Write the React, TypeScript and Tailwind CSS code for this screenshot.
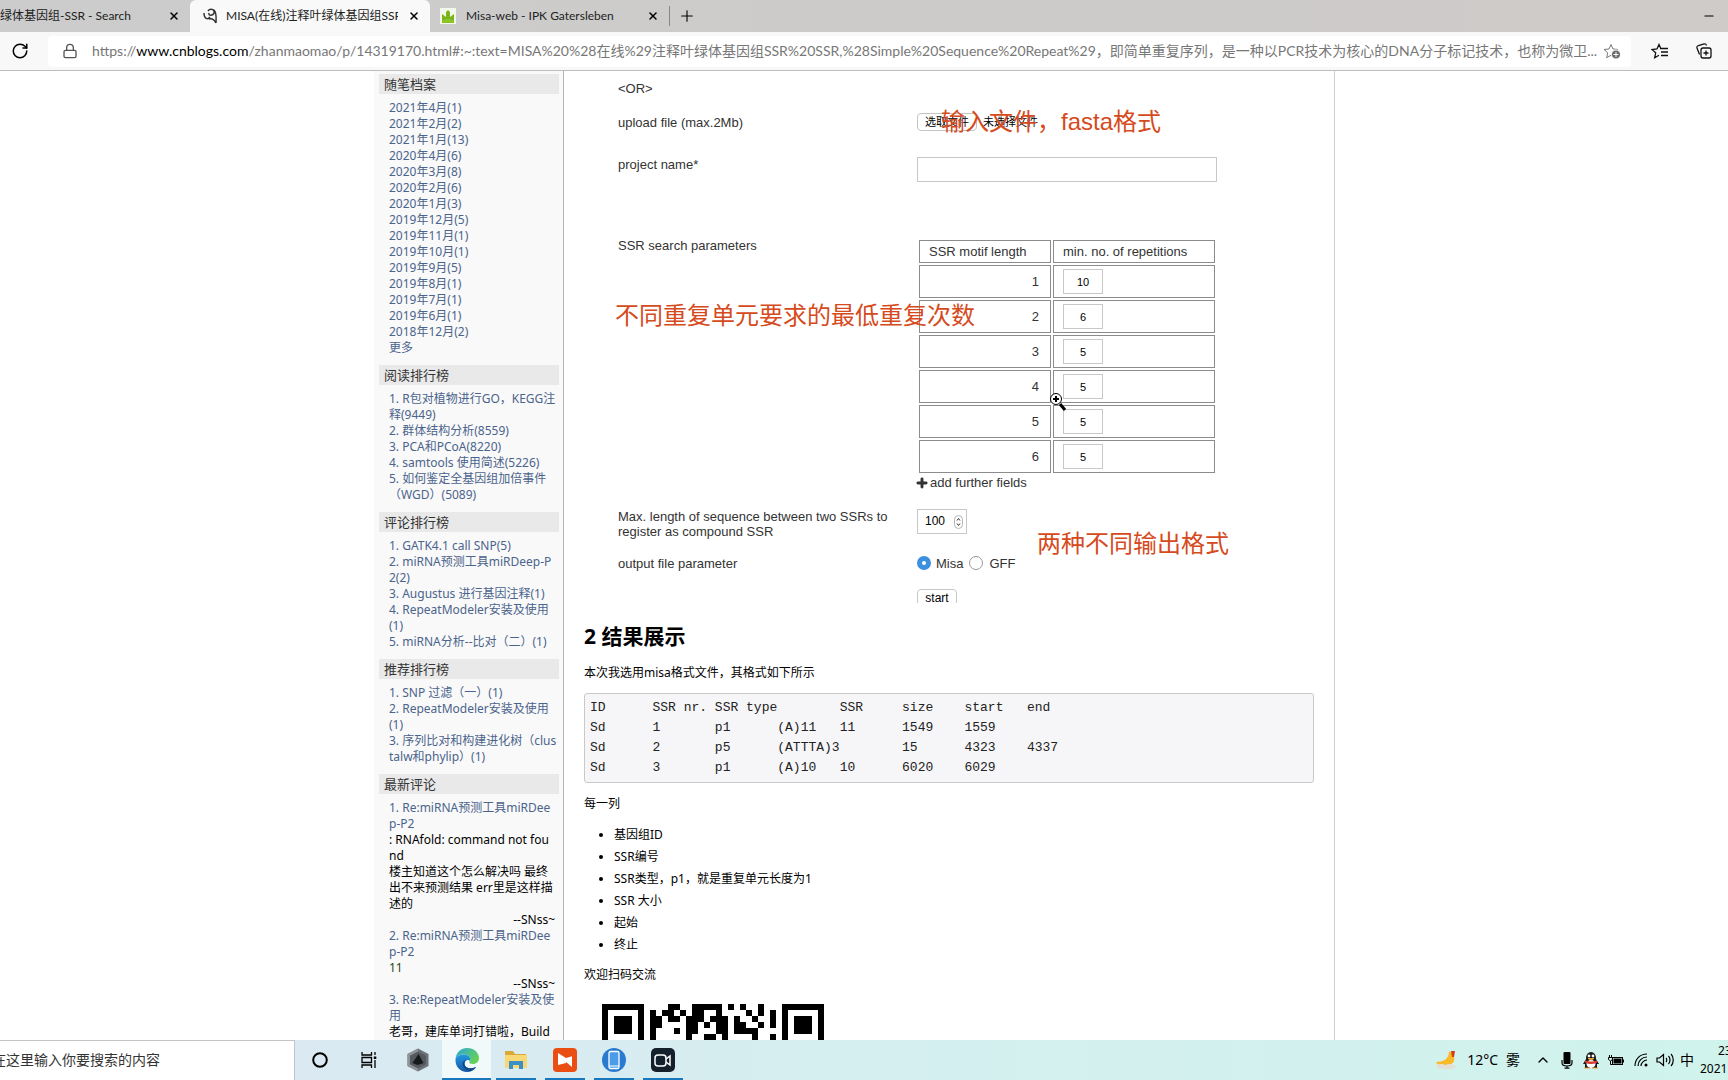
import { ReactNode } from "react";
import { ChevronUp, Lock, Minus, Plus, RotateCw, X } from "lucide-react";

const archive = [
  "2021年4月(1)",
  "2021年2月(2)",
  "2021年1月(13)",
  "2020年4月(6)",
  "2020年3月(8)",
  "2020年2月(6)",
  "2020年1月(3)",
  "2019年12月(5)",
  "2019年11月(1)",
  "2019年10月(1)",
  "2019年9月(5)",
  "2019年8月(1)",
  "2019年7月(1)",
  "2019年6月(1)",
  "2018年12月(2)",
  "更多",
];

const topRead = [
  "1. R包对植物进行GO，KEGG注释(9449)",
  "2. 群体结构分析(8559)",
  "3. PCA和PCoA(8220)",
  "4. samtools 使用简述(5226)",
  "5. 如何鉴定全基因组加倍事件（WGD）(5089)",
];

const topComment = [
  "1. GATK4.1 call SNP(5)",
  "2. miRNA预测工具miRDeep-P2(2)",
  "3. Augustus 进行基因注释(1)",
  "4. RepeatModeler安装及使用(1)",
  "5. miRNA分析--比对（二）(1)",
];

const topLiked = [
  "1. SNP 过滤（一）(1)",
  "2. RepeatModeler安装及使用(1)",
  "3. 序列比对和构建进化树（clustalw和phylip）(1)",
];

const motifs = [
  { length: 1, repeats: 10 },
  { length: 2, repeats: 6 },
  { length: 3, repeats: 5 },
  { length: 4, repeats: 5 },
  { length: 5, repeats: 5 },
  { length: 6, repeats: 5 },
];

const misaOutput = [
  "ID\tSSR nr.\tSSR type\tSSR\tsize\tstart\tend",
  "Sd\t1\tp1\t(A)11\t11\t1549\t1559",
  "Sd\t2\tp5\t(ATTTA)3\t15\t4323\t4337",
  "Sd\t3\tp1\t(A)10\t10\t6020\t6029",
].join("\n");

const columns = ["基因组ID", "SSR编号", "SSR类型，p1，就是重复单元长度为1", "SSR 大小", "起始", "终止"];

// one string per module row, # is a dark module
const qrRows = [
  "#######....##..#####.#.#..#...#######",
  "#.....#.#.##.#.##..#....#.#.#.#.....#",
  "#.###.#.##.##.###.###.#..#..#.#.###.#",
  "#.###.#.##....##.#.##.##..#.#.#.###.#",
  "#.###.#.#...#.##...##.####....#.###.#",
  "#.....#.#.....#..##.#....#..#.#.....#",
];

function Tab({ title, icon, active }: { title: string; icon?: ReactNode; active?: boolean }) {
  return (
    <div
      className={`flex h-8 items-center pr-2 ${
        active ? "w-60 rounded-t-md bg-[#f8f9f8] pl-3" : icon ? "w-[239px] pl-[10px]" : "w-[190px]"
      }`}
    >
      {icon && <span className="mr-[10px] shrink-0">{icon}</span>}
      <span className="flex-1 overflow-hidden font-['Lato','Noto_Sans_CJK_SC',sans-serif] text-xs whitespace-nowrap text-[#222]">
        {title}
      </span>
      <button aria-label="关闭标签页" className="ml-2 flex size-4 shrink-0 items-center justify-center">
        <X className="size-3 text-black" strokeWidth={3} />
      </button>
    </div>
  );
}

function Panel({ title, children }: { title: string; children: ReactNode }) {
  return (
    <section className="mb-[9px]">
      <h3 className="mb-[6px] h-5 bg-[#e9e9e9] pl-[5px] text-[13px] leading-5 text-[#333]">{title}</h3>
      <div className="pr-[2px] pl-[10px] leading-4 break-all">{children}</div>
    </section>
  );
}

function LinkList({ items }: { items: string[] }) {
  return (
    <ul>
      {items.map((item) => (
        <li key={item}>
          <a href="#" className="text-[#4b648c]">{item}</a>
        </li>
      ))}
    </ul>
  );
}

function Sidebar() {
  return (
    <aside className="w-[190px] shrink-0 border-r border-[#b5b5b5] bg-[#f9f9f9] pt-[3px] pr-1 pl-[5px]">
      <Panel title="随笔档案"><LinkList items={archive} /></Panel>
      <Panel title="阅读排行榜"><LinkList items={topRead} /></Panel>
      <Panel title="评论排行榜"><LinkList items={topComment} /></Panel>
      <Panel title="推荐排行榜"><LinkList items={topLiked} /></Panel>
      <Panel title="最新评论">
        <div className="pr-[2px]">
          <a href="#" className="block text-[#4b648c]">1. Re:miRNA预测工具miRDeep-P2</a>
          <p>: RNAfold: command not found</p>
          <p>楼主知道这个怎么解决吗 最终出不来预测结果 err里是这样描述的</p>
          <p className="text-right">--SNss~</p>
          <a href="#" className="block text-[#4b648c]">2. Re:miRNA预测工具miRDeep-P2</a>
          <p className="text-[#1c4a1c]">11</p>
          <p className="text-right">--SNss~</p>
          <a href="#" className="block text-[#4b648c]">3. Re:RepeatModeler安装及使用</a>
          <p>老哥，建库单词打错啦，Build</p>
        </div>
      </Panel>
    </aside>
  );
}

function Note({ className, children }: { className: string; children: ReactNode }) {
  return (
    <span className={`absolute text-2xl leading-8 whitespace-nowrap text-[#d64a20] ${className}`}>{children}</span>
  );
}

function SsrForm() {
  return (
    <form className="relative pl-[34px] font-['Liberation_Sans','Noto_Sans_CJK_SC',sans-serif] text-[13px] leading-[15px] text-[#333]">
      <div className="flex h-[34px] items-center">&lt;OR&gt;</div>
      <div className="grid h-[34px] grid-cols-[299px_1fr] items-center">
        <span>upload file (max.2Mb)</span>
        <div className="flex items-center gap-[6px] text-[11px] text-black">
          <button type="button" className="h-[18px] w-[60px] rounded border border-[#c4c4c4] leading-4">选取文件</button>
          <span>未选择文件</span>
        </div>
      </div>
      <div className="grid h-[99px] grid-cols-[299px_1fr] items-start pt-[18px]">
        <label htmlFor="project">project name*</label>
        <input id="project" className="h-[25px] w-[300px] border border-[#c8c8c8] px-2" />
      </div>
      <div className="grid grid-cols-[299px_1fr] items-start">
        <span>SSR search parameters</span>
        <div>
          <table className="w-[300px] table-fixed border-separate border-spacing-[2px]">
            <thead>
              <tr className="h-[23px]">
                <th className="w-[132px] border border-[#8c8c8c] px-[9px] text-left font-normal">SSR motif length</th>
                <th className="border border-[#8c8c8c] px-[9px] text-left font-normal">min. no. of repetitions</th>
              </tr>
            </thead>
            <tbody>
              {motifs.map((m) => (
                <tr key={m.length} className="h-[33px]">
                  <td className="border border-[#8c8c8c] px-[11px] text-right">{m.length}</td>
                  <td className="border border-[#8c8c8c] px-[9px]">
                    <input
                      aria-label={`repetitions ${m.length}`}
                      defaultValue={m.repeats}
                      className="block h-[25px] w-10 border border-[#c8c8c8] text-center text-[11px] text-black"
                    />
                  </td>
                </tr>
              ))}
            </tbody>
          </table>
          <button type="button" className="-ml-[2px] flex h-[15px] items-center gap-px">
            <Plus className="size-[14px]" strokeWidth={5} />
            add further fields
          </button>
        </div>
      </div>
      <div className="mt-[19px] grid grid-cols-[299px_1fr] items-start">
        <label htmlFor="maxlen" className="pr-6">Max. length of sequence between two SSRs to register as compound SSR</label>
        <div className="flex h-[25px] w-[50px] items-center border border-[#c8c8c8]">
          <input id="maxlen" defaultValue="100" className="w-8 pl-[7px] text-[12px] text-black" />
          <svg className="ml-1 h-[14px] w-[10px]" viewBox="0 0 10 14" fill="none" stroke="#b5b5b5">
            <rect x="0.5" y="0.5" width="8" height="13" rx="4" />
            <path d="M3 5.5l1.5-2 1.5 2M3 8.5l1.5 2 1.5-2" stroke="#333" />
          </svg>
        </div>
      </div>
      <div className="mt-4 grid h-4 grid-cols-[299px_1fr] items-center">
        <span>output file parameter</span>
        <div className="flex items-center">
          <input
            id="misa"
            type="radio"
            name="output"
            defaultChecked
            className="size-[14px] appearance-none rounded-full border border-[#3d8fe0] bg-white checked:border-[5px]"
          />
          <label htmlFor="misa" className="mr-[6px] ml-[5px]">Misa</label>
          <input id="gff" type="radio" name="output" className="size-[14px] appearance-none rounded-full border border-[#999] bg-white" />
          <label htmlFor="gff" className="ml-[6px]">GFF</label>
        </div>
      </div>
      <div className="mt-[18px] ml-[299px] h-[14px] overflow-hidden">
        <button type="button" className="h-[18px] w-10 rounded border border-[#c8c8c8] text-[12px] leading-[15px] text-black">start</button>
      </div>
      <Note className="top-[35px] left-[357px]">输入文件，fasta格式</Note>
      <Note className="top-[229px] left-[31px]">不同重复单元要求的最低重复次数</Note>
      <Note className="top-[457px] left-[453px]">两种不同输出格式</Note>
      <svg className="absolute top-[321px] left-[465px] size-5" viewBox="0 0 20 20" fill="none">
        <path d="M11 12l5 6" stroke="#000" strokeWidth="3" />
        <circle cx="7" cy="7" r="5.5" fill="#fff" stroke="#000" />
        <path d="M4 7h6M7 4v6" stroke="#000" strokeWidth="2" />
      </svg>
    </form>
  );
}

function QrCode() {
  return (
    <svg className="mt-[18px] ml-[18px] h-9 w-[222px]" viewBox="0 0 37 6" shapeRendering="crispEdges" role="img" aria-label="二维码">
      {qrRows.map((row, y) =>
        row.split("").map((c, x) => (c === "#" ? <rect key={`${x}-${y}`} x={x} y={y} width="1" height="1" /> : null))
      )}
    </svg>
  );
}

function Article() {
  return (
    <main className="min-w-0 flex-1 border-r border-[#cfcfcf] pr-5 pl-5 leading-[22px]">
      <SsrForm />
      <h2 className="mt-[18px] text-[21px] leading-[30px] font-bold">2 结果展示</h2>
      <p className="mt-[11px]">本次我选用misa格式文件，其格式如下所示</p>
      <pre className="mt-[9px] rounded-[3px] border border-[#c9c9c9] bg-[#f6f6f8] px-[5px] py-1 font-['Liberation_Mono',monospace] text-[13px] leading-5 text-[#222] [tab-size:8]">
        {misaOutput}
      </pre>
      <p className="mt-[10px]">每一列</p>
      <ul className="mt-[9px] list-disc pl-[30px]">
        {columns.map((c) => (
          <li key={c}>{c}</li>
        ))}
      </ul>
      <p className="mt-2">欢迎扫码交流</p>
      <QrCode />
    </main>
  );
}

function AppButton({ label, active, running, children }: { label: string; active?: boolean; running?: boolean; children: ReactNode }) {
  return (
    <button aria-label={label} className={`flex h-10 w-[49px] flex-col items-center ${active ? "bg-[#f1f9fb]" : ""}`}>
      <span className="flex h-[38px] items-center pt-[2px]">{children}</span>
      {running && <span className={`h-[2px] bg-[#1878bd] ${active ? "w-full" : "w-10"}`} />}
    </button>
  );
}

function Taskbar() {
  return (
    <footer className="flex h-10 shrink-0 items-center overflow-hidden bg-linear-to-r from-[#dde6f3] via-[#d5eff0] to-[#d0f3ec] text-black">
      <div className="h-10 w-[295px] shrink-0 overflow-hidden border-t border-r border-[#c4c4c4] bg-white">
        <input
          aria-label="搜索"
          defaultValue="在这里输入你要搜索的内容"
          className="-ml-2 h-9 w-[280px] text-sm text-[#333]"
        />
      </div>
      <AppButton label="Cortana">
        <svg className="size-4" viewBox="0 0 16 16" fill="none" stroke="#000" strokeWidth="2"><circle cx="8" cy="8" r="6.8" /></svg>
      </AppButton>
      <AppButton label="任务视图">
        <svg className="size-4" viewBox="0 0 16 16" fill="none" stroke="#000" strokeWidth="1.3">
          <path d="M1 0v3h9.500V0M1 16v-3h9.500v3M1 5.500h9.500v5H1zM14 0v3M14 8v8" />
          <path d="M12.800 4.500h2.500v2.500h-2.500z" fill="#000" stroke="none" />
        </svg>
      </AppButton>
      <AppButton label="Studio">
        <svg className="h-6 w-[22px]" viewBox="0 0 22 24">
          <path d="M11 0.500l10.500 5.500v12L11 23.500 0.500 18V6z" fill="#6c7378" />
          <path d="M11 0.500v23L0.500 18V6z" fill="#8d9498" />
          <path d="M11 3.500l8 4.200v8.600l-8 4.200-8-4.200V7.700z" fill="#53595e" />
          <path d="M11.500 6l5 9-6 2-5-2z" fill="#16191c" />
        </svg>
      </AppButton>
      <AppButton label="Edge" active running>
        <svg className="size-6" viewBox="0 0 24 24">
          <defs>
            <linearGradient id="edgeTop" x1="0" y1="0" x2="1" y2="0.6">
              <stop offset="0" stopColor="#2aa6dc" />
              <stop offset="1" stopColor="#65d254" />
            </linearGradient>
            <linearGradient id="edgeBody" x1="0" y1="0" x2="0" y2="1">
              <stop offset="0" stopColor="#2297dd" />
              <stop offset="1" stopColor="#155aa8" />
            </linearGradient>
          </defs>
          <path d="M0.500 11C1 4.500 6 0 12.200 0 19 0 24 4.600 24 10c0 3.800-2.800 6-6 6-2.600 0-4.200-.9-3.700-2 .7-1 1-1.500 1-2.600C15.300 8.500 12 6.500 8.800 6.500 5 6.500 2 8.500 0.500 11z" fill="url(#edgeTop)" />
          <path d="M0.500 11c1.500-3 4.600-4.500 8.300-4.500 3.400 0 6.500 2 6.500 4.900 0 .5-.2 1-.4 1.500C13.700 11 9.500 11.800 9.500 15.500c0 4 5 6.500 11.500 3.500C18.500 22.500 15.500 24 12 24 5 24 0 18.500 0.500 11z" fill="url(#edgeBody)" />
          <path d="M7.500 15.500c0 4.200 4 7.200 8.500 7.700 2-.7 3.700-2.200 5-4.200-6.500 3-11.500.5-11.500-3.500 0-1.500.8-2.700 2-3.300-2.300 0-4 1.300-4 3.300z" fill="#114a8b" />
        </svg>
      </AppButton>
      <AppButton label="文件资源管理器" running>
        <svg className="h-5 w-[22px]" viewBox="0 0 22 20">
          <path d="M0 1h8l2 3h11v12H0z" fill="#d9a93a" />
          <path d="M0 5h22v13H0z" fill="#f8d775" />
          <path d="M4 11h14v8h-4v-4H8v4H4z" fill="#3a8fc4" />
        </svg>
      </AppButton>
      <AppButton label="录屏" running>
        <svg className="size-6" viewBox="0 0 24 24">
          <rect width="24" height="24" rx="4" fill="#ea4e12" />
          <path d="M5 5l8 5v-2l6-3v14l-6-5v1l-8 2z" fill="#fff" />
          <path d="M12 4l8 0v4l-7 2z" fill="#ea4e12" />
        </svg>
      </AppButton>
      <AppButton label="手机" running>
        <svg className="size-6" viewBox="0 0 24 24">
          <circle cx="12" cy="12" r="12" fill="#2a7bd0" />
          <rect x="7" y="3.500" width="10" height="17" rx="1.500" fill="#4a9ce8" stroke="#fff" strokeWidth="1.300" />
          <path d="M7 18h10" stroke="#fff" />
        </svg>
      </AppButton>
      <AppButton label="会议" running>
        <svg className="size-6" viewBox="0 0 24 24" fill="none" stroke="#fff" strokeWidth="1.500">
          <rect width="24" height="24" rx="5" fill="#14212c" stroke="none" />
          <rect x="4" y="7" width="11" height="11" rx="3" />
          <path d="M15 11l4-3v9l-4-3" />
        </svg>
      </AppButton>

      <div className="-mr-3 ml-auto flex items-center text-sm">
        <svg className="mr-[9px] h-5 w-6" viewBox="0 0 24 20">
          <path d="M15 1c0 7-4 11-13 11 2 5 15 6 18-1 1-4-1-8-5-10z" fill="#f8ba28" />
          <path d="M2 17c2-4 7-3 9-2 5-2 9-1 11 2-3 3-17 3-20 0z" fill="#e3e1d6" />
          <path d="M17 1h4l-1 6h-2z" fill="#d43c1c" />
        </svg>
        <span>12°C</span>
        <span className="ml-2">雾</span>
        <ChevronUp className="ml-[15px] size-4" strokeWidth={2} />
        <svg className="ml-[10px] h-[17px] w-3" viewBox="0 0 12 17">
          <rect x="2.500" width="7" height="12" rx="1" />
          <path d="M1 8v3c0 4 10 4 10 0V8M6 14v2M3.500 16.200h5" fill="none" stroke="#000" strokeWidth="1.200" />
        </svg>
        <svg className="ml-[10px] h-[17px] w-4" viewBox="0 0 16 17">
          <ellipse cx="8" cy="6" rx="5" ry="6" fill="#181818" />
          <path d="M3 7L0 12l2 0v4h12v-4h2l-3-5z" fill="#181818" />
          <ellipse cx="8" cy="12" rx="4.500" ry="4" fill="#fff" />
          <path d="M2 8c3 2 9 2 12 0v2.500c-4 2-8 2-12 0z" fill="#d93a2c" />
          <circle cx="6" cy="4" r="1.400" fill="#fff" />
          <circle cx="10" cy="4" r="1.400" fill="#fff" />
          <path d="M5 6.500h6l-3 1.500zM1 16h6M9 16h6" fill="#eda032" stroke="#eda032" />
        </svg>
        <svg className="ml-[9px] h-[11px] w-4" viewBox="0 0 16 11" fill="none" stroke="#000">
          <rect x="4.500" y="2.500" width="10" height="7" />
          <rect x="6" y="4" width="7" height="4" fill="#000" />
          <path d="M15.500 4.500v3M0.500 2.500h4v2l-2 1.500-2-1.500zM1.500 0v2M3.500 0v2M2.500 6v3.500h2" />
        </svg>
        <svg className="ml-[10px] size-[14px]" viewBox="0 0 14 14" fill="none" stroke="#000" strokeWidth="1.200">
          <path d="M1 13C1 6 6 1 13 1M4 13c0-5 4-9 9-9M7 13c0-3 3-6 6-6" />
          <circle cx="12" cy="12" r="1.500" fill="#000" stroke="none" />
        </svg>
        <svg className="ml-[8px] h-[14px] w-[18px]" viewBox="0 0 18 14" fill="none" stroke="#000" strokeWidth="1.200">
          <path d="M1 5h2.500L7.500 1.500v11L3.500 9H1zM10 5c1 1 1 3 0 4M12.500 3c2 2 2 6 0 8M15 1c3 3 3 9 0 12" />
        </svg>
        <span className="ml-[6px]">中</span>
        <div className="ml-[6px] w-10 text-xs leading-[18px] whitespace-nowrap">
          <div className="pl-[18px]">23</div>
          <div>2021</div>
        </div>
      </div>
    </footer>
  );
}

function StarIcon() {
  return <path d="M8 1.500l2 4.500 5 .5-3.700 3.300 1 4.900L8 12.300l-4.300 2.400 1-4.900L1 6.500 6 6z" />;
}

export default function App() {
  return (
    <div className="flex h-screen flex-col overflow-hidden bg-white font-['Noto_Sans','Noto_Sans_CJK_SC',sans-serif] text-xs text-black">
      {/* Tab strip */}
      <header className="flex h-8 shrink-0 items-center bg-linear-to-r from-[#cccccc] to-[#cecbc9]">
        <Tab title="绿体基因组-SSR - Search" />
        <Tab
          active
          title="MISA(在线)注释叶绿体基因组SSR"
          icon={
            <svg className="-mr-1 size-[18px]" viewBox="0 0 18 18" fill="none" stroke="#333" strokeWidth="1.500">
              <path d="M2 6c0 6 4 7 6 4M6 4c2-3 7-2 6 2-1 3-6 3-5 0M12 3c3 3 2 8 2 13M7 12c3-1 5 0 7 4" />
            </svg>
          }
        />
        <Tab
          title="Misa-web - IPK Gatersleben"
          icon={
            <svg className="size-4" viewBox="0 0 16 16">
              <rect width="16" height="16" fill="#f4f8ec" />
              <path d="M2 6l4 3v6H2zM14 6l-4 3v6h4zM6 4l2-2 2 2v7l-2 2-2-2z" fill="#7ab51d" />
              <path d="M2 12h12v3H2z" fill="#8fc31f" />
            </svg>
          }
        />
        <span className="h-5 w-px bg-[#888]" />
        <button aria-label="新建标签页" className="ml-2">
          <Plus className="size-[18px]" strokeWidth={1.5} />
        </button>
        <button aria-label="最小化" className="mr-3 ml-auto">
          <Minus className="size-[14px]" strokeWidth={2} />
        </button>
      </header>

      {/* Address bar */}
      <nav className="flex h-[39px] shrink-0 items-center border-b border-[#bdbdbd] bg-[#f8f8f8]">
        <button aria-label="刷新" className="mr-[19px] ml-[11px]">
          <RotateCw className="size-[18px]" strokeWidth={2} />
        </button>
        <div className="flex h-[31px] min-w-0 flex-1 items-center rounded bg-white pr-[10px] pl-[14px]">
          <Lock className="size-4 shrink-0 text-[#555]" strokeWidth={2} />
          <a href="#" className="ml-[14px] min-w-0 flex-1 truncate font-['Lato','Noto_Sans_CJK_SC',sans-serif] text-sm text-[#777]">
            https://<span className="text-black">www.cnblogs.com</span>
            /zhanmaomao/p/14319170.html#:~:text=MISA%20%28在线%29注释叶绿体基因组SSR%20SSR,%28Simple%20Sequence%20Repeat%29，即简单重复序列，是一种以PCR技术为核心的DNA分子标记技术，也称为微卫...
          </a>
          <button aria-label="收藏" className="ml-1">
            <svg className="h-4 w-[18px]" viewBox="0 0 18 16" fill="none" stroke="#777">
              <StarIcon />
              <circle cx="13" cy="11.500" r="4.500" fill="#666" stroke="#fff" />
              <path d="M10.500 11.500h5M13 9v5" stroke="#fff" />
            </svg>
          </button>
        </div>
        <button aria-label="收藏夹" className="mr-7 ml-5">
          <svg className="h-4 w-[17px]" viewBox="0 0 17 16" fill="none" stroke="#111" strokeWidth="1.300">
            <path d="M10 6L8 1.500 6 6l-5 .5 3.700 3.300-1 4.900L8 12.300M9 5.500h8M10 9h7M10 12.500h7" />
          </svg>
        </button>
        <button aria-label="集锦" className="mr-4">
          <svg className="size-4" viewBox="0 0 16 16" fill="none" stroke="#111" strokeWidth="1.300">
            <rect x="5" y="5" width="10" height="10" rx="2" />
            <path d="M10 7.500v5M7.500 10h5M3.500 11.500L1 5c-.5-1.500 0-2 1.500-2.500L8 1c1.500-.5 2 0 2.500 1.500" />
          </svg>
        </button>
      </nav>

      {/* Blog page */}
      <div className="min-h-0 flex-1 overflow-hidden pr-[19px]">
        <div className="mx-auto flex max-w-[961px]">
          <Sidebar />
          <Article />
        </div>
      </div>

      <Taskbar />
    </div>
  );
}
